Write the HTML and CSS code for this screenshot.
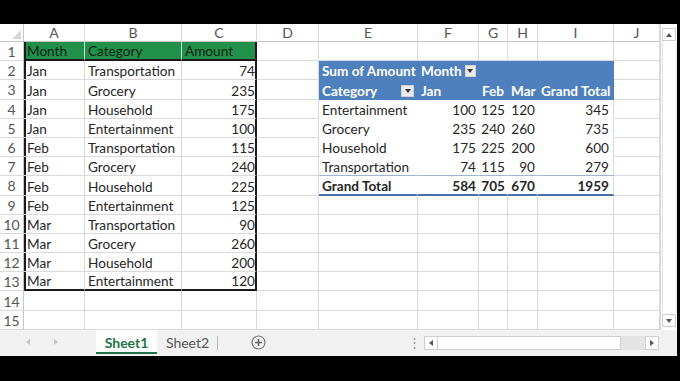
FILE: index.html
```html
<!DOCTYPE html>
<html lang="en">
<head>
  <meta charset="UTF-8">
  <title>Book1 - Pivot</title>
  <link rel="stylesheet" href="styles.css">
</head>
<body>
  <div class="book">
    <div class="main">
      <div class="sheet">
        <!-- column headers -->
        <div class="cn"><span class="tri"></span></div>
        <div class="ch">A</div><div class="ch">B</div><div class="ch">C</div><div class="ch">D</div>
        <div class="ch">E</div><div class="ch">F</div><div class="ch">G</div><div class="ch">H</div>
        <div class="ch">I</div><div class="ch">J</div>

        <!-- row 1 -->
        <div class="rn">1</div>
        <div class="hd ol-l ol-b">Month</div><div class="hd ol-b">Category</div><div class="hd ol-r ol-b">Amount</div>
        <div></div><div></div><div></div><div></div><div></div><div></div><div></div>

        <!-- row 2 -->
        <div class="rn">2</div>
        <div class="ol-l">Jan</div><div>Transportation</div><div class="num ol-r">74</div>
        <div></div>
        <div class="pv">Sum of Amount</div><div class="pv">Month <span class="dd"></span></div><div class="pv"></div><div class="pv"></div><div class="pv"></div>
        <div></div>

        <!-- row 3 -->
        <div class="rn">3</div>
        <div class="ol-l">Jan</div><div>Grocery</div><div class="num ol-r">235</div>
        <div></div>
        <div class="pv">Category <span class="dd end"></span></div><div class="pv">Jan</div><div class="pv">Feb</div><div class="pv">Mar</div><div class="pv">Grand Total</div>
        <div></div>

        <!-- row 4 -->
        <div class="rn">4</div>
        <div class="ol-l">Jan</div><div>Household</div><div class="num ol-r">175</div>
        <div></div>
        <div class="pc">Entertainment</div><div class="pc num">100</div><div class="pc num">125</div><div class="pc num">120</div><div class="pc last num">345</div>
        <div></div>

        <!-- row 5 -->
        <div class="rn">5</div>
        <div class="ol-l">Jan</div><div>Entertainment</div><div class="num ol-r">100</div>
        <div></div>
        <div class="pc">Grocery</div><div class="pc num">235</div><div class="pc num">240</div><div class="pc num">260</div><div class="pc last num">735</div>
        <div></div>

        <!-- row 6 -->
        <div class="rn">6</div>
        <div class="ol-l">Feb</div><div>Transportation</div><div class="num ol-r">115</div>
        <div></div>
        <div class="pc">Household</div><div class="pc num">175</div><div class="pc num">225</div><div class="pc num">200</div><div class="pc last num">600</div>
        <div></div>

        <!-- row 7 -->
        <div class="rn">7</div>
        <div class="ol-l">Feb</div><div>Grocery</div><div class="num ol-r">240</div>
        <div></div>
        <div class="pc sub">Transportation</div><div class="pc sub num">74</div><div class="pc sub num">115</div><div class="pc sub num">90</div><div class="pc sub last num">279</div>
        <div></div>

        <!-- row 8 -->
        <div class="rn">8</div>
        <div class="ol-l">Feb</div><div>Household</div><div class="num ol-r">225</div>
        <div></div>
        <div class="pg">Grand Total</div><div class="pg num">584</div><div class="pg num">705</div><div class="pg num">670</div><div class="pg last num">1959</div>
        <div></div>

        <!-- row 9 -->
        <div class="rn">9</div>
        <div class="ol-l">Feb</div><div>Entertainment</div><div class="num ol-r">125</div>
        <div></div><div></div><div></div><div></div><div></div><div></div><div></div>

        <!-- row 10 -->
        <div class="rn">10</div>
        <div class="ol-l">Mar</div><div>Transportation</div><div class="num ol-r">90</div>
        <div></div><div></div><div></div><div></div><div></div><div></div><div></div>

        <!-- row 11 -->
        <div class="rn">11</div>
        <div class="ol-l">Mar</div><div>Grocery</div><div class="num ol-r">260</div>
        <div></div><div></div><div></div><div></div><div></div><div></div><div></div>

        <!-- row 12 -->
        <div class="rn">12</div>
        <div class="ol-l">Mar</div><div>Household</div><div class="num ol-r">200</div>
        <div></div><div></div><div></div><div></div><div></div><div></div><div></div>

        <!-- row 13 -->
        <div class="rn">13</div>
        <div class="ol-l ol-b">Mar</div><div class="ol-b">Entertainment</div><div class="num ol-r ol-b">120</div>
        <div></div><div></div><div></div><div></div><div></div><div></div><div></div>

        <!-- row 14 -->
        <div class="rn">14</div>
        <div></div><div></div><div></div><div></div><div></div><div></div><div></div><div></div><div></div><div></div>

        <!-- row 15 -->
        <div class="rn">15</div>
        <div></div><div></div><div></div><div></div><div></div><div></div><div></div><div></div><div></div><div></div>
      </div>

      <div class="vscroll">
        <div class="sbtn"><span class="ar up"></span></div>
        <div class="vtrack"></div>
        <div class="sbtn"><span class="ar down"></span></div>
      </div>
    </div>

    <div class="tabbar">
      <div class="nav">
        <span class="ar left light"></span>
        <span class="ar right light"></span>
      </div>
      <div class="tab active">Sheet1</div>
      <div class="tab">Sheet2</div>
      <div class="add">
        <svg width="15" height="15" viewBox="0 0 15 15">
          <circle cx="7.5" cy="7.5" r="6.5" fill="none" stroke="#777" stroke-width="1.2"/>
          <path d="M7.5 4v7M4 7.5h7" stroke="#666" stroke-width="1.6"/>
        </svg>
      </div>
      <div class="split">&#8942;</div>
      <div class="hscroll">
        <div class="sbtn"><span class="ar left"></span></div>
        <div class="thumb"></div>
        <div class="rest"></div>
        <div class="sbtn"><span class="ar right"></span></div>
      </div>
    </div>
  </div>
</body>
</html>
```

FILE: styles.css
```css
body {
  margin: 0;
  background: #000;
  font-family: Lato, "Liberation Sans", sans-serif;
  color: #262626;
}

.book {
  margin-top: 24px;
  width: 677px;
  height: 332px;
  background: #fff;
  display: flex;
  flex-direction: column;
}
.main {
  display: flex;
  height: 306px;
}

/* grid of cells */
.sheet {
  display: grid;
  grid-template-columns: 24px 61px 97px 75px 62px 99px 61px 29px 30px 76px 46px;
  grid-template-rows: 18px repeat(15, 19.2px);
  font-size: 13.6px;
}
.sheet > div {
  box-sizing: border-box;
  border-right: 1px solid #dadada;
  border-bottom: 1px solid #dadada;
  display: flex;
  align-items: flex-end;
  padding: 0 2px 0 3px;
  line-height: 15px;
  white-space: nowrap;
  overflow: hidden;
}
.sheet > .ch {
  justify-content: center;
  align-items: center;
  padding: 0;
  color: #555;
  font-size: 14px;
  border-bottom-color: #c6c6c6;
}
.sheet > .rn {
  justify-content: center;
  align-items: center;
  padding: 1px 0 0;
  color: #555;
  font-size: 14px;
  border-right-color: #c6c6c6;
}
.sheet > .cn {
  justify-content: flex-end;
  padding: 0 2px 2px 0;
  border-color: #c6c6c6;
}
.tri {
  width: 0;
  height: 0;
  border-left: 9px solid transparent;
  border-bottom: 9px solid #d8d8d8;
}
.sheet > .num { justify-content: flex-end; }

/* source data */
.sheet > .hd {
  background: #21904a;
  color: #0b2412;
}
.sheet > .ol-l { box-shadow: inset 2px 0 #1a1a1a; }
.sheet > .ol-r { border-right: 2px solid #1a1a1a; padding-right: 0; }
.sheet > .ol-b { border-bottom: 2px solid #1a1a1a; }

/* pivot table */
.sheet > .pv {
  background: #4f80be;
  border-color: #4f80be;
  color: #fff;
  font-weight: 700;
}
.sheet > .pc { border-right-color: #fff; border-bottom-color: #fff; }
.sheet > .pc.sub { border-bottom-color: #9db6d8; }
.sheet > .pg {
  border-right-color: #fff;
  border-bottom: 2px solid #4a72aa;
  font-weight: 700;
}
.sheet > .last { border-right-color: #dadada; padding-right: 4px; }

.dd {
  box-sizing: border-box;
  width: 13px;
  height: 12px;
  margin: 0 0 2px 3px;
  background: #ececec;
  border: 1px solid #d0d0d0;
  display: flex;
  align-items: center;
  justify-content: center;
}
.dd::after {
  content: "";
  border-top: 4px solid #333;
  border-left: 3px solid transparent;
  border-right: 3px solid transparent;
}
.dd.end { margin-left: auto; margin-right: 1px; }

/* arrows used by scrollbars and sheet nav */
.ar {
  width: 0;
  height: 0;
  border: 3px solid transparent;
}
.ar.up { border-bottom: 4px solid #555; border-top-width: 0; }
.ar.down { border-top: 4px solid #555; border-bottom-width: 0; }
.ar.left { border-right: 4px solid #555; border-left-width: 0; }
.ar.right { border-left: 4px solid #555; border-right-width: 0; }
.ar.light.left { border-right-color: #c4c4c4; }
.ar.light.right { border-left-color: #c4c4c4; }

.vscroll {
  width: 17px;
  border-left: 1px solid #d6d6d6;
  display: flex;
  flex-direction: column;
  padding: 4px 0 3px 1px;
  box-sizing: border-box;
  gap: 1px;
}
.sbtn {
  box-sizing: border-box;
  width: 14px;
  height: 13px;
  border: 1px solid #cfcfcf;
  background: #fff;
  display: flex;
  align-items: center;
  justify-content: center;
  flex: none;
}
.vtrack {
  flex: 1;
  border-left: 1px solid #e4e4e4;
  border-right: 1px solid #e4e4e4;
}

/* sheet tabs */
.tabbar {
  flex: 1;
  display: flex;
  background: #f1f1f1;
  font-size: 14px;
  padding-bottom: 2px;
}
.nav {
  width: 96px;
  display: flex;
  align-items: center;
  gap: 24px;
  padding-left: 26px;
  box-sizing: border-box;
}
.tab {
  width: 61px;
  display: flex;
  align-items: center;
  justify-content: center;
  color: #555;
  box-sizing: border-box;
  position: relative;
}
.tab.active {
  background: #fff;
  color: #217346;
  font-weight: 700;
  border-bottom: 2px solid #217346;
  padding-top: 2px;
}
.tab + .tab::after {
  content: "";
  position: absolute;
  right: 0;
  top: 6px;
  height: 14px;
  border-right: 1px solid #b8b8b8;
}
.add {
  margin-left: 33px;
  display: flex;
  align-items: center;
}
.split {
  margin-left: auto;
  width: 16px;
  display: flex;
  align-items: center;
  color: #999;
  font-size: 13px;
}
.hscroll {
  align-self: center;
  display: flex;
  height: 14px;
  margin: 2px 18px 0 0;
}
.hscroll .sbtn { height: 14px; }
.thumb {
  width: 183px;
  box-sizing: border-box;
  border: 1px solid #cfcfcf;
  border-left: 0;
  background: #fff;
}
.rest {
  width: 24px;
  background: #e4e4e4;
}
```
